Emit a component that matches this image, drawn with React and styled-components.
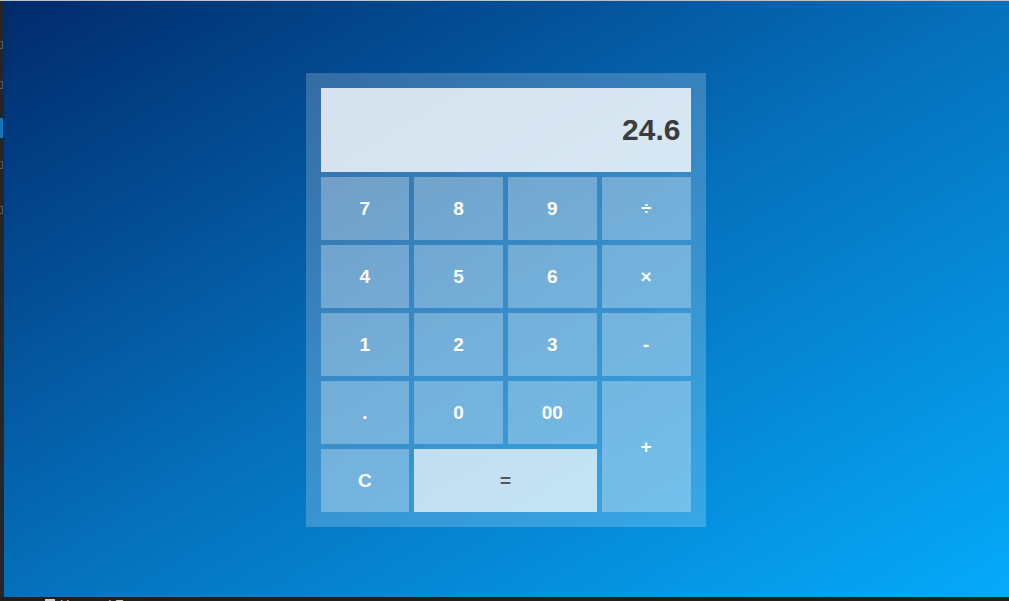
import React from 'react';
import styled, { createGlobalStyle } from 'styled-components';

const GlobalStyle = createGlobalStyle`
  html, body {
    margin: 0;
    padding: 0;
    overflow: hidden;
    background: #1e1e1e;
  }
  * {
    box-sizing: border-box;
  }
`;

const keys = [
  { label: '7' },
  { label: '8' },
  { label: '9' },
  { label: '÷' },
  { label: '4' },
  { label: '5' },
  { label: '6' },
  { label: '×' },
  { label: '1' },
  { label: '2' },
  { label: '3' },
  { label: '-' },
  { label: '.' },
  { label: '0' },
  { label: '00' },
  { label: '+', tall: true },
  { label: 'C' },
  { label: '=', wide: true, accent: true }
];

function App() {
  return (
    <Screen>
      <GlobalStyle />
      <TopLine />
      <Middle>
        <SideStrip>
          <SideMark $top={40} />
          <SideMark $top={80} />
          <SideActive />
          <SideMark $top={160} />
          <SideMark $top={205} />
        </SideStrip>
        <Desktop>
          <Calculator>
            <Display>24.6</Display>
            <Keypad>
              {
                keys.map((k) => (
                  <Key
                    key={ k.label }
                    $tall={ k.tall }
                    $wide={ k.wide }
                    $accent={ k.accent }
                  >
                    { k.label }
                  </Key>
                ))
              }
            </Keypad>
          </Calculator>
        </Desktop>
      </Middle>
      <StatusBar>
        <StatusItem>
          <Box />
          Unsaved Exce
        </StatusItem>
        <StatusArrow>›</StatusArrow>
      </StatusBar>
    </Screen>
  );
}

export default App;

const Screen = styled.div`
  width: 1009px;
  height: 601px;
  display: flex;
  flex-direction: column;
  font-family: "Liberation Sans", Arial, sans-serif;
`;

const TopLine = styled.div`
  height: 1px;
  background: #bfc3c8;
`;

const Middle = styled.div`
  flex: 1;
  display: flex;
`;

const SideStrip = styled.div`
  width: 4px;
  background: #262626;
  position: relative;
`;

const SideMark = styled.span`
  position: absolute;
  left: 0;
  top: ${ (p) => p.$top }px;
  width: 3px;
  height: 8px;
  border: 1px solid #5a5a5a;
  border-left: none;
`;

const SideActive = styled.span`
  position: absolute;
  left: 0;
  top: 117px;
  width: 3px;
  height: 20px;
  background: #1177bb;
`;

const Desktop = styled.div`
  flex: 1;
  display: flex;
  align-items: center;
  justify-content: center;
  background: linear-gradient(to bottom right, #012a6c 0%, #0570bb 50%, #05abfb 100%);
`;

const Calculator = styled.div`
  width: 400px;
  padding: 15px;
  margin-top: 2px;
  margin-right: 2px;
  background: rgba(255, 255, 255, 0.2);
  display: flex;
  flex-direction: column;
  gap: 5px;
`;

const Display = styled.div`
  height: 84px;
  background: rgba(255, 255, 255, 0.8);
  display: flex;
  align-items: center;
  justify-content: flex-end;
  padding-right: 10px;
  font-size: 30px;
  font-weight: bold;
  color: #3c3c3c;
`;

const Keypad = styled.div`
  display: grid;
  grid-template-columns: repeat(4, 1fr);
  grid-auto-rows: 63px;
  gap: 5px;
`;

const Key = styled.div`
  display: flex;
  align-items: center;
  justify-content: center;
  font-size: 19px;
  font-weight: bold;
  color: ${ (p) => p.$accent ? '#555' : '#fff' };
  background: ${ (p) => p.$accent ? 'rgba(255, 255, 255, 0.7)' : 'rgba(255, 255, 255, 0.3)' };
  grid-row: ${ (p) => p.$tall ? 'span 2' : 'auto' };
  grid-column: ${ (p) => p.$wide ? 'span 2' : 'auto' };
`;

const StatusBar = styled.div`
  height: 4px;
  overflow: hidden;
  background: #1e1e1e;
  display: flex;
  align-items: flex-start;
  padding-left: 45px;
  gap: 60px;
`;

const StatusItem = styled.div`
  display: flex;
  align-items: flex-start;
  gap: 5px;
  padding-top: 1px;
  font-size: 13px;
  line-height: 13px;
  color: #c8c8c8;
`;

const Box = styled.span`
  width: 10px;
  height: 10px;
  margin-top: 1px;
  background: #d0d0d0;
`;

const StatusArrow = styled.span`
  font-size: 13px;
  line-height: 13px;
  color: #999;
`;
